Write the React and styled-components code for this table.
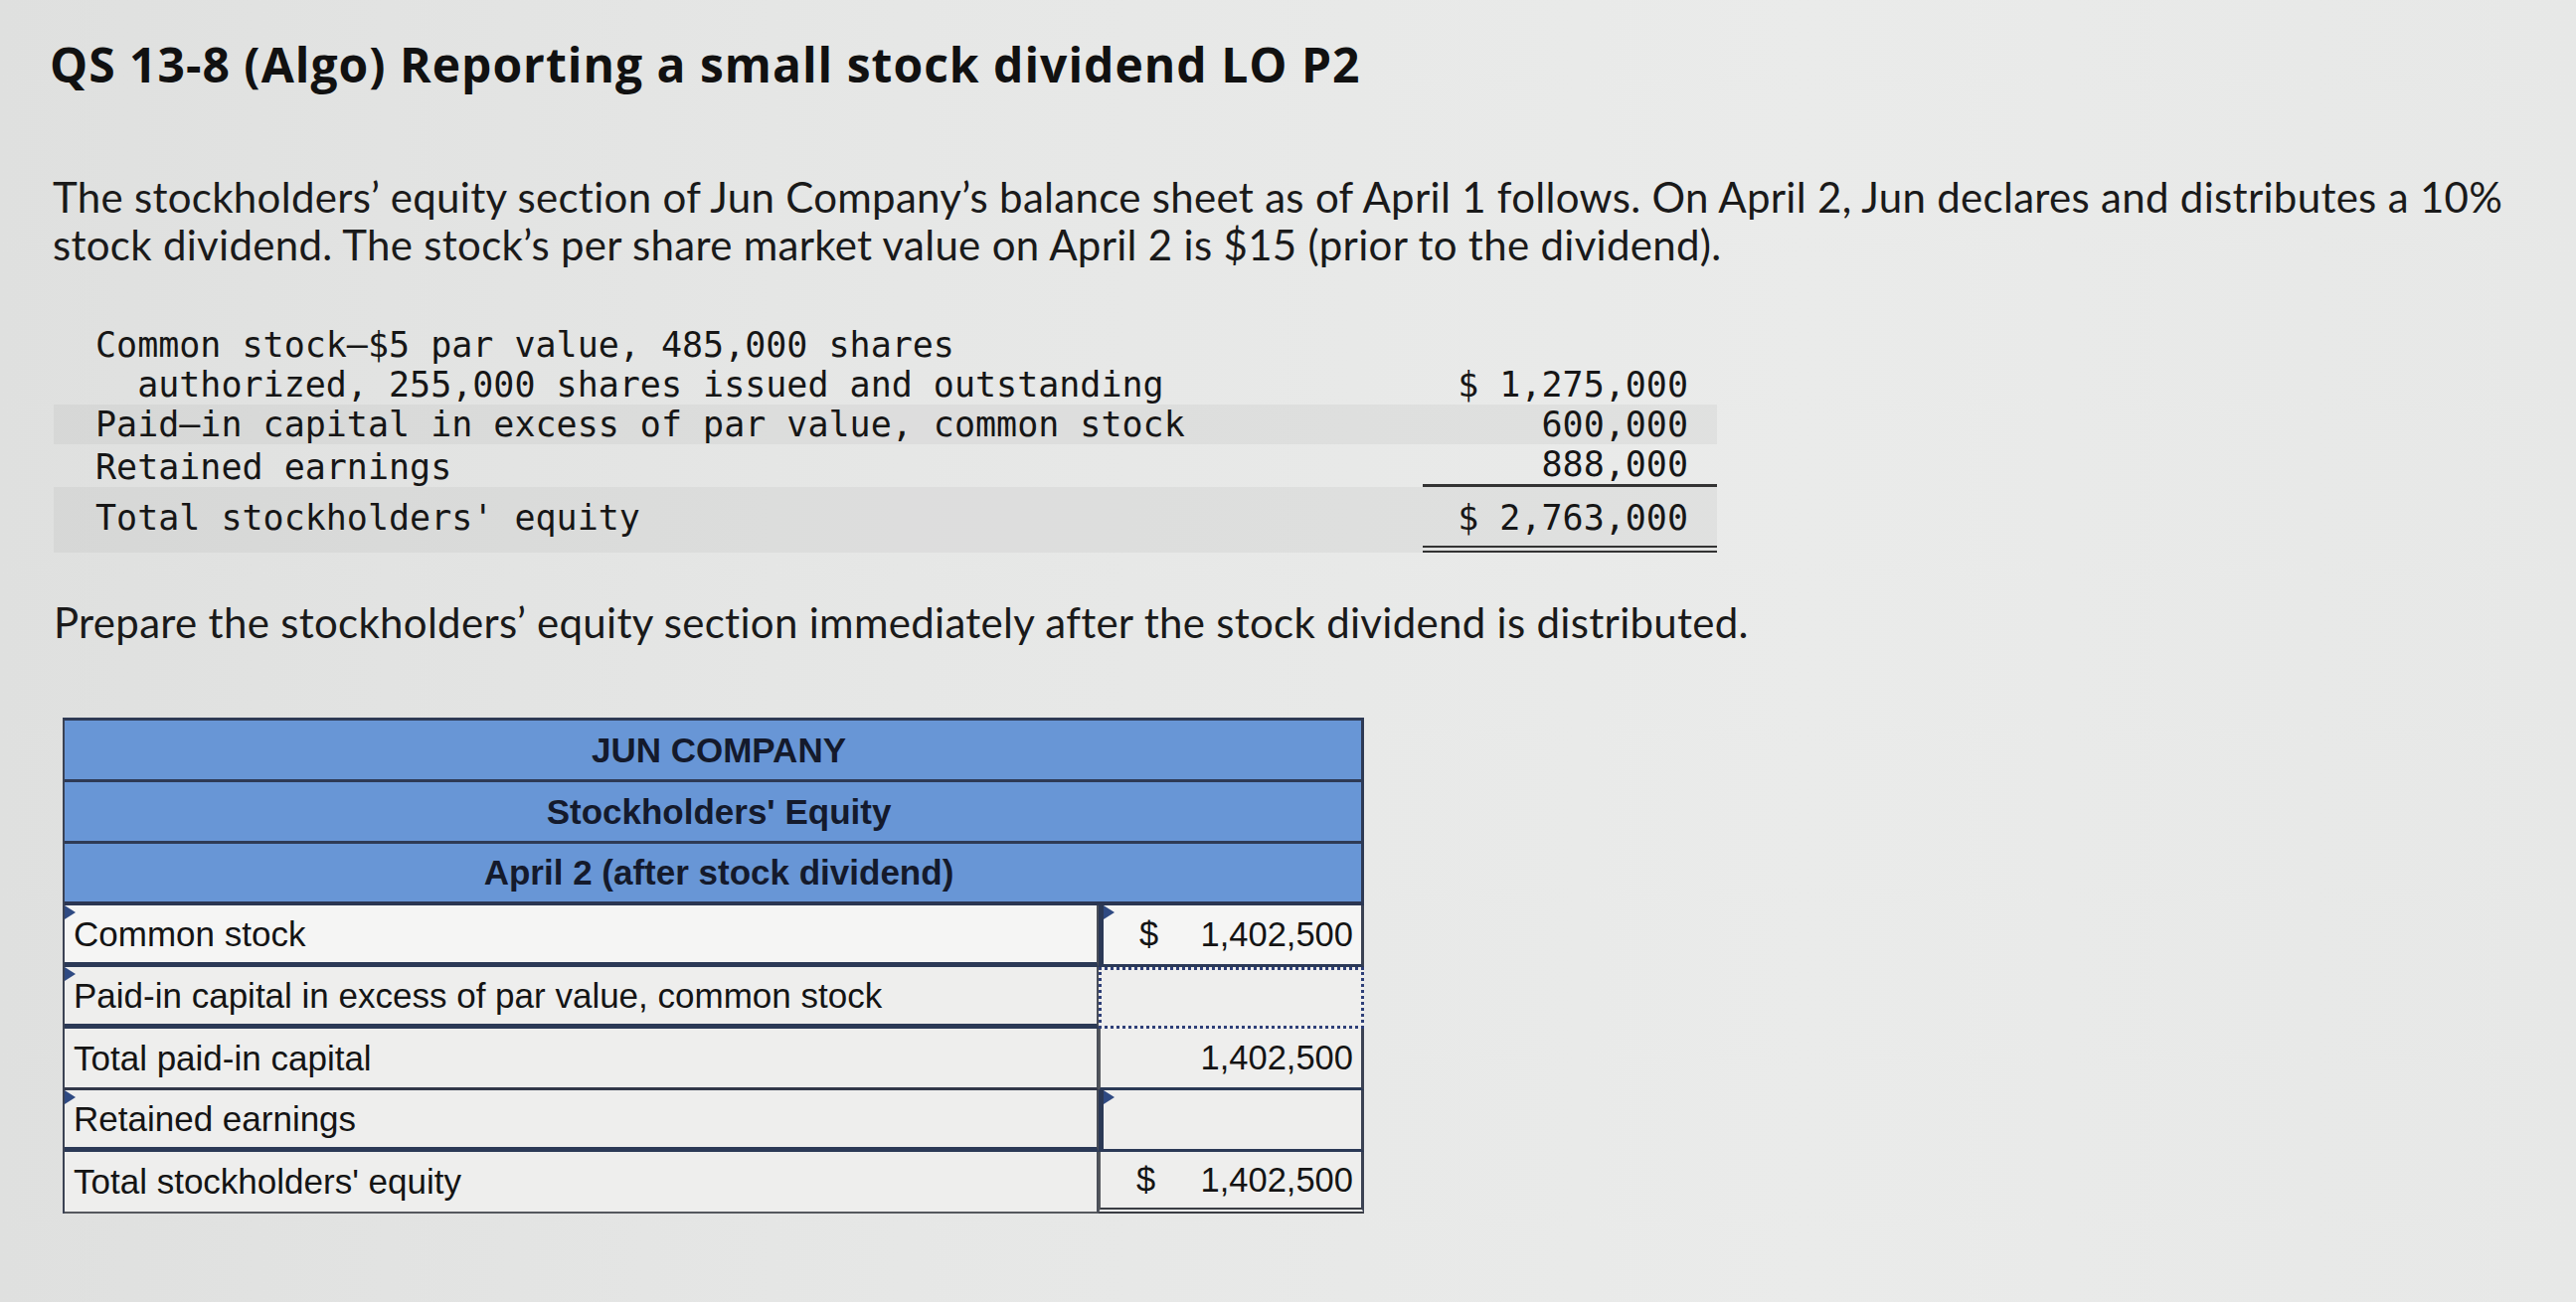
import React from "react"
import styled, { createGlobalStyle } from "styled-components"

const GlobalStyle = createGlobalStyle`
  html, body {
    margin: 0;
    padding: 0;
    min-height: 100%;
  }
  body {
    background: linear-gradient(90deg, #dfe0df 0%, #e6e7e6 35%, #eaebea 70%, #e7e8e7 100%);
    color: #151515;
    font-family: Lato, "Open Sans", sans-serif;
  }
`

const lines = [
  { label: ["Common stock\u2013$5 par value, 485,000 shares", "  authorized, 255,000 shares issued and outstanding"], amount: "$ 1,275,000" },
  { label: ["Paid\u2013in capital in excess of par value, common stock"], amount: "600,000", shaded: true },
  { label: ["Retained earnings"], amount: "888,000", rule: "single" },
  { label: ["Total stockholders' equity"], amount: "$ 2,763,000", shaded: true, total: true, rule: "double" },
]

const rows = [
  { label: "Common stock", value: "1,402,500", dollar: true, input: true, bright: true },
  { label: "Paid-in capital in excess of par value, common stock", input: true, focus: true },
  { label: "Total paid-in capital", value: "1,402,500" },
  { label: "Retained earnings", input: true },
  { label: "Total stockholders' equity", value: "1,402,500", dollar: true, total: true },
]

function App() {
  return (
    <>
      <GlobalStyle />
      <Page>
        <Title>QS 13-8 (Algo) Reporting a small stock dividend LO P2</Title>
        <Intro>
          The stockholders’ equity section of Jun Company’s balance sheet as of April 1 follows. On April 2, Jun declares and distributes a 10%
          <br />
          stock dividend. The stock’s per share market value on April 2 is $15 (prior to the dividend).
        </Intro>

        <Ledger>
          {lines.map((l, i) => (
            <LedgerRow key={i} $shaded={l.shaded} $total={l.total}>
              <LedgerLabel $total={l.total}>
                {l.label.map((t, j) => (
                  <div key={j}>{t}</div>
                ))}
              </LedgerLabel>
              <LedgerAmount $rule={l.rule}>{l.amount}</LedgerAmount>
            </LedgerRow>
          ))}
        </Ledger>

        <Prompt>Prepare the stockholders’ equity section immediately after the stock dividend is distributed.</Prompt>

        <Sheet>
          <HeadRow>JUN COMPANY</HeadRow>
          <HeadRow>Stockholders' Equity</HeadRow>
          <HeadRow $last>April 2 (after stock dividend)</HeadRow>
          {rows.map((r, i) => (
            <BodyRow key={i}>
              <LabelCell $input={r.input} $bright={r.bright} $last={r.total}>
                {r.input && <Marker />}
                {r.label}
              </LabelCell>
              <ValueCell $input={r.input} $focus={r.focus} $total={r.total} $bright={r.bright}>
                {r.input && !r.focus && <Marker />}
                <span>{r.dollar ? "$" : ""}</span>
                <span>{r.value}</span>
              </ValueCell>
            </BodyRow>
          ))}
        </Sheet>
      </Page>
    </>
  )
}

export default App

const Page = styled.div`
  padding: 37px 0 0 50px;
  min-height: 1280px;
  box-sizing: border-box;
`

const Title = styled.h1`
  margin: 0;
  font-family: "Open Sans", Lato, sans-serif;
  font-weight: 700;
  font-size: 48px;
  line-height: 56px;
  color: #111;
  letter-spacing: 1px;
`

const Intro = styled.p`
  margin: 81px 0 0 3px;
  font-family: Lato, sans-serif;
  font-size: 42px;
  line-height: 48px;
  letter-spacing: 0.3px;
  color: #1a1a1a;
  white-space: nowrap;
`

const Ledger = styled.div`
  margin: 57px 0 0 4px;
  width: 1673px;
  font-family: "DejaVu Sans Mono", monospace;
  font-size: 35px;
  line-height: 40px;
  color: #161616;
`

const LedgerRow = styled.div`
  display: grid;
  grid-template-columns: 1fr 296px;
  align-items: end;
  background: ${p => (p.$shaded ? "rgba(0, 0, 0, 0.04)" : "transparent")};
  padding-top: ${p => (p.$total ? "11px" : "0")};
`

const LedgerLabel = styled.div`
  padding-left: 42px;
  padding-bottom: ${p => (p.$total ? "15px" : "0")};
  white-space: pre;
`

const LedgerAmount = styled.div`
  text-align: right;
  padding-right: 29px;
  padding-bottom: ${p => (p.$rule === "double" ? "8px" : "0")};
  white-space: pre;
  border-bottom: ${p =>
    p.$rule === "single" ? "3px solid #333" : p.$rule === "double" ? "7px double #333" : "none"};
`

const Prompt = styled.p`
  margin: 46px 0 0 4px;
  font-family: Lato, sans-serif;
  font-size: 42px;
  line-height: 48px;
  letter-spacing: 0.3px;
  color: #1a1a1a;
`

const Sheet = styled.div`
  margin: 72px 0 0 13px;
  width: 1309px;
  border-top: 3px solid #2e3a55;
  border-left: 2px solid #3b4253;
  box-sizing: border-box;
  font-family: "Liberation Sans", Arial, sans-serif;
`

const HeadRow = styled.div`
  height: 62px;
  display: flex;
  align-items: center;
  justify-content: center;
  padding-left: 12px;
  background: #6896d6;
  border-right: 3px solid #2e3a55;
  border-bottom: ${p => (p.$last ? "4px solid #2b3652" : "3px solid #2e3a55")};
  box-sizing: border-box;
  font-size: 35px;
  font-weight: 700;
  color: #141a2c;
`

const BodyRow = styled.div`
  display: grid;
  grid-template-columns: 1040px 1fr;
  height: 62px;
`

const LabelCell = styled.div`
  position: relative;
  display: flex;
  align-items: center;
  padding-left: 9px;
  box-sizing: border-box;
  font-size: 35px;
  color: #141414;
  background: ${p => (p.$bright ? "#f5f5f4" : "#eeeeed")};
  border-right: 2px solid #4a4e58;
  border-bottom: ${p => (p.$input ? "5px solid #2b3956" : p.$last ? "2px solid #55585e" : "3px solid #33384a")};
`

const ValueCell = styled.div`
  position: relative;
  display: flex;
  align-items: center;
  justify-content: space-between;
  padding: 0 8px 0 36px;
  box-sizing: border-box;
  font-size: 34.5px;
  color: #141414;
  background: ${p => (p.$bright ? "#f5f5f4" : "#eeeeed")};
  border-left: ${p => (p.$input && !p.$focus ? "5px solid #2b3956" : "2px solid #55585e")};
  border-right: 3px solid #3b4253;
  border-bottom: ${p => (p.$total ? "6px double #3a3d44" : "3px solid #2b3956")};
  ${p =>
    p.$focus &&
    `
    border: 3px dotted #2e3f78;
  `}
`

const Marker = styled.span`
  position: absolute;
  top: 0;
  left: 0;
  width: 0;
  height: 0;
  border-top: 7px solid transparent;
  border-bottom: 7px solid transparent;
  border-left: 11px solid #2f4a82;
`
